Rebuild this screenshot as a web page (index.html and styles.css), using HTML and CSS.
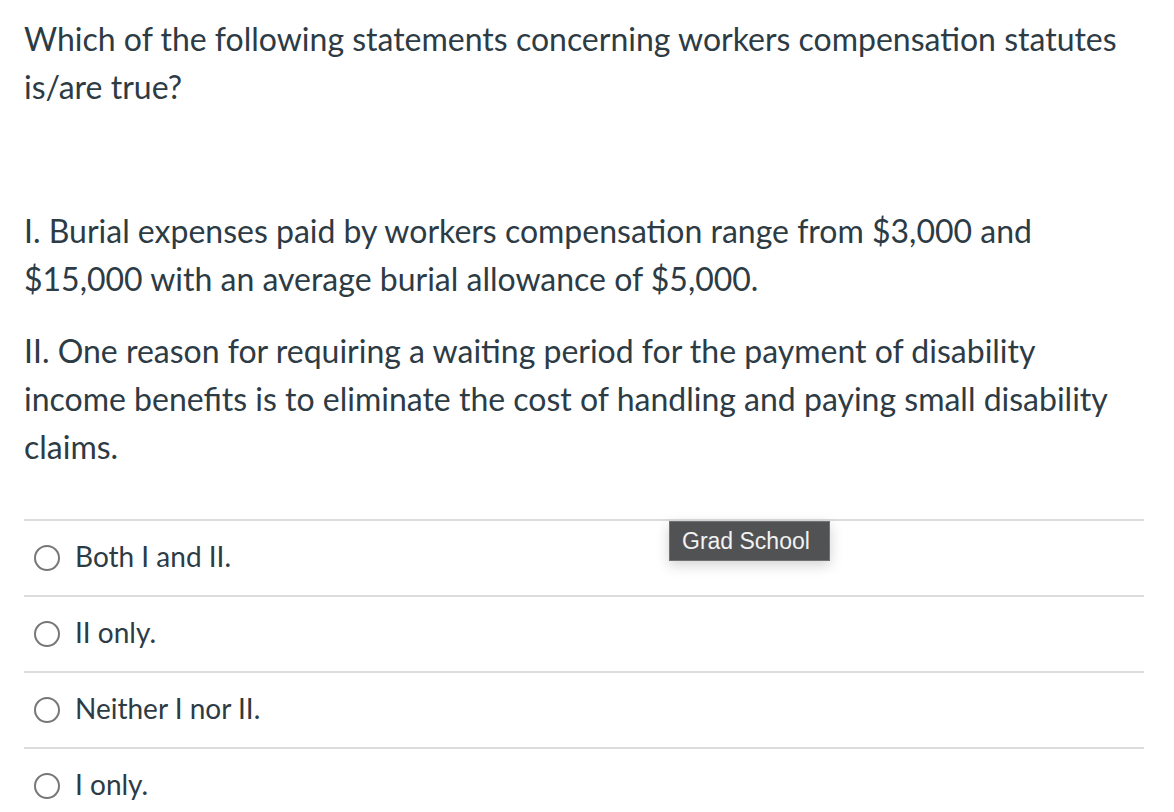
FILE: index.html
```html
<!DOCTYPE html>
<html>
<head>
<meta charset="utf-8">
<link rel="stylesheet" href="styles.css">
</head>
<body>
<div class="quiz">
  <div class="question-text">
    <p>Which of the following statements concerning workers compensation statutes is/are true?</p>
    <p>&nbsp;</p>
    <p>I. Burial expenses paid by workers compensation range from $3,000 and $15,000 with an average burial allowance of $5,000.</p>
    <p>II. One reason for requiring a waiting period for the payment of disability income benefits is to eliminate the cost of handling and paying small disability claims.</p>
  </div>
  <div class="answers">
    <div class="answer">
      <span class="radio"></span>
      <span class="label">Both I and II.</span>
      <span class="tooltip">Grad School</span>
    </div>
    <div class="answer">
      <span class="radio"></span>
      <span class="label">II only.</span>
    </div>
    <div class="answer">
      <span class="radio"></span>
      <span class="label">Neither I nor II.</span>
    </div>
    <div class="answer">
      <span class="radio"></span>
      <span class="label">I only.</span>
    </div>
  </div>
</div>
</body>
</html>
```
FILE: styles.css
```css
html, body {
  margin: 0;
  padding: 0;
  background: #ffffff;
}
body {
  font-family: Lato, "Helvetica Neue", Arial, sans-serif;
  color: #2d3b45;
  overflow: hidden;
}
.quiz {
  width: 1120px;
  padding: 15px 0 0 24px;
}
.question-text {
  font-size: 32px;
  line-height: 48px;
  padding-bottom: 24px;
}
.question-text p {
  margin: 0 0 24px 0;
}
.answer {
  position: relative;
  display: flex;
  align-items: center;
  height: 74px;
  border-top: 2px solid #dcdcdc;
  font-size: 28px;
}
.radio {
  box-sizing: border-box;
  width: 26px;
  height: 26px;
  margin-left: 10px;
  margin-right: 15px;
  border: 2px solid #777777;
  border-radius: 50%;
  flex: none;
}
.label {
  line-height: 40px;
  margin-bottom: 4px;
}
.tooltip {
  position: absolute;
  left: 645px;
  top: 0;
  box-sizing: border-box;
  height: 40px;
  padding: 0 19px 0 12px;
  display: flex;
  align-items: center;
  background: #515254;
  border: 1px solid #727272;
  color: #f2f2f2;
  font-family: "Liberation Sans", Arial, sans-serif;
  font-size: 23px;
  box-shadow: 0 4px 14px rgba(0,0,0,0.18);
}
```
